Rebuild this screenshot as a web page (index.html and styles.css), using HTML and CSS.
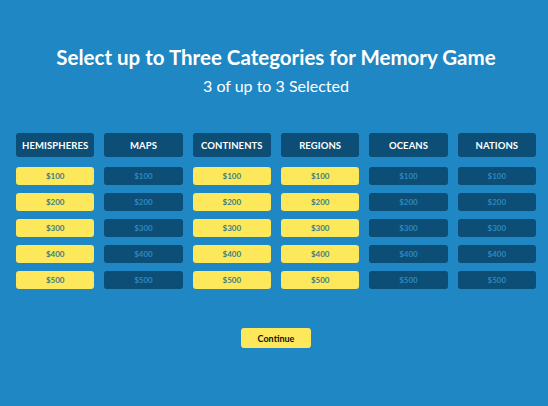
FILE: index.html
```html
<!DOCTYPE html>
<html>
  <head>
    <title>Memory Game</title>
    <link rel="stylesheet" href="styles.css">
  </head>
  <body>
    <div id="setup">
      <h1 class="title">Select up to Three Categories for Memory Game</h1>
      <div class="subtitle">3 of up to 3 Selected</div>

      <div id="board">
        <div class="column selected">
          <div class="category">HEMISPHERES</div>
          <div class="value">$100</div>
          <div class="value">$200</div>
          <div class="value">$300</div>
          <div class="value">$400</div>
          <div class="value">$500</div>
        </div>
        <div class="column">
          <div class="category">MAPS</div>
          <div class="value">$100</div>
          <div class="value">$200</div>
          <div class="value">$300</div>
          <div class="value">$400</div>
          <div class="value">$500</div>
        </div>
        <div class="column selected">
          <div class="category">CONTINENTS</div>
          <div class="value">$100</div>
          <div class="value">$200</div>
          <div class="value">$300</div>
          <div class="value">$400</div>
          <div class="value">$500</div>
        </div>
        <div class="column selected">
          <div class="category">REGIONS</div>
          <div class="value">$100</div>
          <div class="value">$200</div>
          <div class="value">$300</div>
          <div class="value">$400</div>
          <div class="value">$500</div>
        </div>
        <div class="column">
          <div class="category">OCEANS</div>
          <div class="value">$100</div>
          <div class="value">$200</div>
          <div class="value">$300</div>
          <div class="value">$400</div>
          <div class="value">$500</div>
        </div>
        <div class="column">
          <div class="category">NATIONS</div>
          <div class="value">$100</div>
          <div class="value">$200</div>
          <div class="value">$300</div>
          <div class="value">$400</div>
          <div class="value">$500</div>
        </div>
      </div>

      <button id="continue">Continue</button>
    </div>
  </body>
</html>
```

FILE: styles.css
```css
body {
  margin: 0;
  padding: 0;
  background-color: #1f87c3;
  font-family: Lato, "Open Sans", sans-serif;
  color: white;
}

#setup {
  height: 406px;
  display: flex;
  flex-direction: column;
  align-items: center;
  padding-top: 45px;
  padding-left: 4px;
  box-sizing: border-box;
}

.title {
  margin: 0;
  font-size: 20.5px;
  font-weight: bold;
  line-height: 24px;
}

.subtitle {
  margin-top: 7px;
  font-size: 16px;
  line-height: 20px;
}

#board {
  width: 520px;
  margin-top: 37px;
  display: grid;
  grid-template-columns: repeat(6, 1fr);
  column-gap: 10px;
}

.column {
  display: flex;
  flex-direction: column;
  gap: 8px;
}

.category {
  height: 24px;
  margin-bottom: 2px;
  background-color: #0c4e75;
  border-radius: 3px;
  display: flex;
  align-items: center;
  justify-content: center;
  font-size: 9.5px;
  font-weight: bold;
  letter-spacing: 0.1px;
}

.value {
  height: 18px;
  background-color: #0c4e75;
  border-radius: 3px;
  display: flex;
  align-items: center;
  justify-content: center;
  font-size: 8px;
  font-weight: bold;
  color: #2d88c0;
}

.selected .value {
  background-color: #fde75a;
  color: #3a7f86;
}

#continue {
  margin-top: 39px;
  width: 70px;
  height: 20px;
  background-color: #fde75a;
  border: none;
  border-radius: 3px;
  font-family: Lato, "Open Sans", sans-serif;
  font-size: 9px;
  font-weight: bold;
  color: #111;
  cursor: pointer;
}
```
